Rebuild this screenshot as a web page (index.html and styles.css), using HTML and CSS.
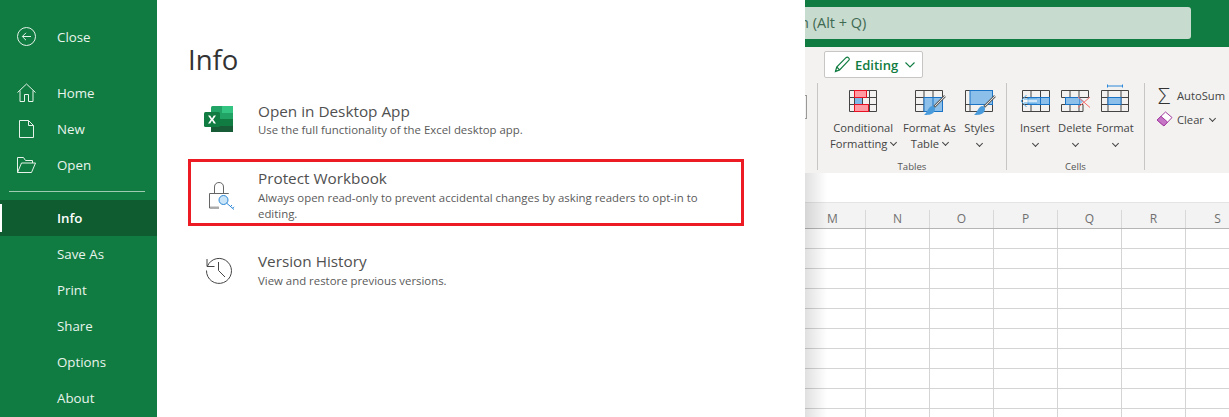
FILE: index.html
```html
<!DOCTYPE html>
<html lang="en">
<head>
<meta charset="utf-8">
<title>Info</title>
<link rel="stylesheet" href="styles.css">
</head>
<body>
<div class="app">
  <nav class="side">
    <a class="nav close-item"><span class="nav-ico"><svg width="22" height="22" viewBox="0 0 22 22"><circle cx="10.5" cy="10.5" r="9" fill="none" stroke="#e6f2ea" stroke-width="1"/><path d="M15 10.5H6.5M10 6.8L6.3 10.5L10 14.2" fill="none" stroke="#e6f2ea"/></svg></span>Close</a>
    <a class="nav"><span class="nav-ico"><svg width="22" height="22" viewBox="0 0 22 22"><path d="M1.5 10.5L10.5 2L19.5 10.5M4 8.5V19.5H8.5V12.5H12.5V19.5H17V8.5" fill="none" stroke="#e6f2ea"/></svg></span>Home</a>
    <a class="nav"><span class="nav-ico"><svg width="22" height="22" viewBox="0 0 22 22"><path d="M3.5 2.5V19.5H17.5V7.5L12.5 2.5ZM12.5 2.5V7.5H17.5" fill="none" stroke="#e6f2ea"/></svg></span>New</a>
    <a class="nav"><span class="nav-ico"><svg width="22" height="22" viewBox="0 0 22 22"><path d="M1.5 18.5V3.5H7.5L9.5 6.5H16.5V9M1.5 18.5H15.5L19.5 9H5.5L1.5 18.5Z" fill="none" stroke="#e6f2ea"/></svg></span>Open</a>
    <hr class="side-sep">
    <a class="nav active">Info</a>
    <a class="nav">Save As</a>
    <a class="nav">Print</a>
    <a class="nav">Share</a>
    <a class="nav">Options</a>
    <a class="nav">About</a>
  </nav>

  <main class="info">
    <h1 class="info-title">Info</h1>
    <div class="option opt-open">
      <span class="opt-ico"><svg width="32" height="30" viewBox="0 0 32 30"><rect x="8" y="1" width="22" height="26" rx="1.5" fill="#21a366"/><rect x="19" y="1" width="11" height="7" fill="#33c481"/><rect x="8" y="14" width="22" height="7" fill="#107c41"/><rect x="8" y="21" width="22" height="6" fill="#185c37"/><rect x="1" y="7" width="16" height="15" rx="1.5" fill="#107c41"/><path d="M5 10.5H7.2L9 13.4L10.8 10.5H13L10.2 14.5L13 18.5H10.8L9 15.6L7.2 18.5H5L7.8 14.5Z" fill="#fff"/></svg></span>
      <div><div class="opt-title">Open in Desktop App</div><p class="opt-desc">Use the full functionality of the Excel desktop app.</p></div>
    </div>
    <div class="option opt-protect">
      <span class="opt-ico"><svg width="30" height="30" viewBox="0 0 30 30"><path d="M6.5 12V6C6.5 3 8.5 1.5 11 1.5S15.5 3 15.5 6V12" fill="none" stroke="#666"/><path d="M20.5 13V12.5H1.5V27H11" fill="none" stroke="#666"/><path d="M2 26.5H11" stroke="#aaa" stroke-width="2"/><circle cx="15.5" cy="19" r="4.5" fill="#c9e5f7" stroke="#2b88d8"/><path d="M18.7 22.2L26 28.5M22.5 25.5L24 24M24.5 27.3L26 25.8" fill="none" stroke="#2b88d8"/></svg></span>
      <div><div class="opt-title">Protect Workbook</div><p class="opt-desc">Always open read-only to prevent accidental changes by asking readers to opt-in to editing.</p></div>
    </div>
    <div class="option opt-history">
      <span class="opt-ico"><svg width="32" height="32" viewBox="0 0 32 32"><path d="M4 5V12.5H11.5" fill="none" stroke="#444"/><path d="M4.5 12A12.5 12.5 0 1 1 3.5 16.5" fill="none" stroke="#444"/><path d="M15.5 8V16.5L22 23" fill="none" stroke="#444"/></svg></span>
      <div><div class="opt-title">Version History</div><p class="opt-desc">View and restore previous versions.</p></div>
    </div>
  </main>

  <section class="excel">
    <div class="topbar"><div class="search">Search (Alt + Q)</div></div>
    <div class="ribbon">
      <div class="mode-row">
        <div class="mode"><svg width="17" height="17" viewBox="0 0 17 17"><path d="M1.5 15.5L2.7 11L12 1.7C12.8 1 13.8 1 14.6 1.9C15.5 2.7 15.5 3.6 14.7 4.4L5.6 13.9Z" fill="none" stroke="#107c41" stroke-width="1.2"/><path d="M2.7 11L5.6 13.9" stroke="#107c41" stroke-width="1.2"/></svg><span>Editing</span><svg width="12" height="8" viewBox="0 0 12 8"><path d="M1.5 1.5L6 6L10.5 1.5" fill="none" stroke="#107c41" stroke-width="1.1"/></svg></div>
      </div>
      <div class="tools">
        <div class="group g-stub"><span class="stub"></span></div>
        <div class="group g-tables">
          <div class="btns">
            <div class="btn b-wide">
              <svg class="tool-ico" width="30" height="28" viewBox="0 0 30 28"><rect x="6.5" y="8.5" width="8" height="7" fill="#7db8e8" stroke="#1a73c4"/><path d="M1.5 1.5H28.5V22.5H1.5ZM1.5 8.5H28.5M1.5 15.5H28.5M6.5 1.5V22.5M14.5 8.5V15.5M21.5 1.5V22.5" fill="none" stroke="#444"/><g fill="#ff9aa2" stroke="#e81123"><rect x="6.5" y="1.5" width="12" height="7"/><rect x="6.5" y="15.5" width="14" height="7"/></g></svg>
              <span class="lbl">Conditional</span><span class="lbl">Formatting<i class="chev-in"></i></span>
            </div>
            <div class="btn b-wide">
              <svg class="tool-ico tool-brush" width="32" height="28" viewBox="0 0 32 28"><path d="M1.5 1.5H28.5V22.5H1.5ZM1.5 8.5H28.5M1.5 15.5H28.5M10 1.5V22.5M19 1.5V22.5" fill="none" stroke="#444"/><rect x="10" y="8.5" width="18.5" height="14" fill="#8cc0ea" stroke="#1a73c4"/><path d="M19 8.5V22.5" stroke="#1a73c4"/><path d="M31 7L20 18" stroke="#666" stroke-width="2.5"/><path d="M31 7L21 17" stroke="#fff" stroke-width=".8"/><path d="M18 17C21 17 22 20 20 23C18 26 13 26 10 26C13 24 14 18 18 17Z" fill="#4a9bdc"/></svg>
              <span class="lbl">Format As</span><span class="lbl">Table<i class="chev-in"></i></span>
            </div>
            <div class="btn b-narrow">
              <svg class="tool-ico tool-brush" width="32" height="28" viewBox="0 0 32 28"><path d="M1.5 1.5H28.5V22.5H1.5ZM1.5 15.5H28.5M6 15.5V22.5" fill="none" stroke="#444"/><rect x="6" y="1.5" width="22.5" height="14" fill="#8cc0ea" stroke="#1a73c4"/><path d="M31 7L20 18" stroke="#666" stroke-width="2.5"/><path d="M31 7L21 17" stroke="#fff" stroke-width=".8"/><path d="M18 17C21 17 22 20 20 23C18 26 13 26 10 26C13 24 14 18 18 17Z" fill="#4a9bdc"/></svg>
              <span class="lbl">Styles</span><i class="chev"></i>
            </div>
          </div>
          <div class="group-name">Tables</div>
        </div>
        <div class="group g-cells">
          <div class="btns">
            <div class="btn b-cell">
              <svg class="tool-ico" width="32" height="28" viewBox="0 0 32 28"><path d="M3.5 1.5H30.5V22.5H3.5ZM3.5 8.5H30.5M3.5 15.5H30.5M12 1.5V22.5M21.5 1.5V22.5" fill="none" stroke="#444"/><rect x="9" y="8.5" width="21.5" height="7" fill="#8cc0ea" stroke="#1a73c4"/><path d="M21.5 8.5V15.5" stroke="#1a73c4"/><path d="M18 10H5V14H18Z" fill="#fff" fill-opacity=".6"/><path d="M18 10H5M18 14H5M7.5 6L2 12L7.5 18" fill="none" stroke="#4ea6e6"/></svg>
              <span class="lbl">Insert</span><i class="chev"></i>
            </div>
            <div class="btn b-cell">
              <svg class="tool-ico" width="32" height="28" viewBox="0 0 32 28"><path d="M2.5 1.5H29.5V8.5H2.5ZM2.5 15.5H24V22.5H2.5ZM11 1.5V8.5M20 1.5V8.5M11 15.5V22.5M20 15.5V22.5" fill="none" stroke="#444"/><rect x="6.5" y="8.5" width="14" height="7" fill="#8cc0ea" stroke="#1a73c4"/><path d="M20.5 8.5V15.5L25 12Z" fill="#8cc0ea"/><path d="M19 8L31 18.5M31 8L19 18.5" stroke="#f56b6b"/></svg>
              <span class="lbl">Delete</span><i class="chev"></i>
            </div>
            <div class="btn b-cell">
              <svg class="tool-ico tool-top" width="32" height="30" viewBox="0 0 32 30"><path d="M8 3H24M8.500 1.500V4.500M23.500 1.500V4.500" stroke="#2b88d8"/><path d="M2.500 7.500H29.500V28.500H2.500ZM2.500 14.500H29.500M2.500 21.500H29.500M9 7.500V28.500M22 7.500V28.500" fill="none" stroke="#444"/><rect x="9" y="14.500" width="13" height="7" fill="#8cc0ea" stroke="#1a73c4"/></svg>
              <span class="lbl">Format</span><i class="chev"></i>
            </div>
          </div>
          <div class="group-name">Cells</div>
        </div>
        <div class="g-edit">
          <div class="edit-row"><span class="edit-ico sigma">Σ</span><span>AutoSum</span></div>
          <div class="edit-row"><span class="edit-ico"><svg class="eraser" width="18" height="16" viewBox="0 0 18 16"><path d="M1 9L9.500 1L16 6.500L8 15Z" fill="#fff" stroke="#a33ea1"/><path d="M1 9L5 5.300L11.500 11L8 15Z" fill="#c674c5" stroke="#a33ea1"/></svg></span><span>Clear</span><i class="chev chev-edit"></i></div>
        </div>
      </div>
    </div>
    <div class="formula"></div>
    <div class="col-head">
      <span class="col c-first">M</span><span class="col">N</span><span class="col">O</span><span class="col">P</span><span class="col">Q</span><span class="col">R</span><span class="col">S</span>
    </div>
    <div class="cells"></div>
    <div class="edge-shade"></div>
  </section>
</div>
</body>
</html>
```
FILE: styles.css
```css
* { box-sizing: border-box; }
html, body { margin: 0; height: 100%; overflow: hidden; }
body { font-family: "Open Sans", "Noto Sans", sans-serif; background: #fff; }
.app { display: flex; width: 1229px; height: 417px; overflow: hidden; }

/* Backstage sidebar */
.side { flex: 0 0 157px; background: #107c41; padding-top: 19px; color: #e9f4ed; }
.nav { display: flex; align-items: center; height: 36px; padding-left: 57px; font-size: 13.3px; position: relative; }
.nav-ico { position: absolute; left: 16px; top: 7px; width: 22px; height: 22px; }
.nav-ico svg { display: block; }
.close-item { margin-bottom: 20px; }
.side-sep { border: 0; height: 1px; background: #9fcbb2; margin: 8px 12px 8px 9px; }
.active { background: #0e5c2f; font-weight: 600; color: #fff; }
.active::before { content: ""; position: absolute; left: 0; top: 4px; bottom: 4px; width: 2px; background: #fff; }

/* Info panel */
.info { flex: 0 0 648px; padding: 42px 0 0 31px; color: #444; }
.info-title { margin: 0 0 22px; font-size: 27.5px; line-height: 36px; font-weight: 400; color: #333; }
.option { display: flex; width: 556px; }
.opt-ico { flex: 0 0 70px; padding-left: 15px; }
.opt-ico svg { display: block; }
.opt-title { font-size: 15.3px; line-height: 22px; color: #505050; }
.opt-desc { margin: 0; font-size: 11.4px; line-height: 16px; color: #5a5a5a; }
.opt-open { height: 40px; margin-bottom: 19px; }
.opt-open .opt-ico { padding-top: 5px; }
.opt-protect { height: 67px; border: 3px solid #ed1c24; padding-top: 5px; margin-bottom: 24px; }
.opt-protect .opt-ico { padding-top: 14px; padding-left: 17px; flex-basis: 67px; }
.opt-protect .opt-desc { max-width: 470px; margin-top: 1px; }
.opt-history .opt-desc { margin-top: 1px; }
.opt-history .opt-ico { padding-top: 4px; }

/* Excel window behind */
.excel { flex: 1; position: relative; overflow: hidden; background: #fff; }
.topbar { height: 47px; background: #107c41; padding-top: 7px; }
.search { height: 32px; width: 486px; margin-left: -100px; padding-left: 58px; background: #c8dbcf; border-radius: 3px; font-size: 14.5px; line-height: 32px; color: #3f6a52; }
.ribbon { height: 126px; background: #f3f2f1; box-shadow: 0 1px 2px rgba(0,0,0,.12); font-size: 11.2px; color: #444; }
.mode-row { height: 36px; padding: 4px 0 0 19px; }
.mode { display: flex; align-items: center; gap: 4px; width: 99px; height: 27px; padding-left: 9px; background: #fff; border: 1px solid #c8c6c4; border-radius: 2px; color: #107c41; font-size: 13px; font-weight: 600; }
.mode span { margin-right: 2px; }
.tools { display: flex; height: 87px; }
.group { border-right: 1px solid #c8c6c4; position: relative; display: flex; flex-direction: column; }
.g-stub { flex: 0 0 13px; }
.stub { display: block; width: 2px; height: 24px; margin-top: 12px; border: 1px solid #999; border-left: 0; }
.g-tables { flex: 0 0 189px; }
.g-cells { flex: 0 0 138px; }
.btns { display: flex; flex: 1; }
.g-tables .btns { padding-left: 12px; }
.g-cells .btns { padding-left: 8px; }
.btn { display: flex; flex-direction: column; align-items: center; padding-top: 6px; line-height: 16px; }
.b-wide { flex: 0 0 66px; }
.b-narrow { flex: 0 0 31px; }
.b-cell { flex: 0 0 40px; }
.tool-ico { display: block; flex: none; margin-bottom: 3px; overflow: visible; }
.tool-brush { margin-left: 2px; }
.tool-top { margin-top: -6px; margin-bottom: 7px; }
.lbl { display: block; white-space: nowrap; }
.chev, .chev-in { display: inline-block; width: 5px; height: 5px; border-right: 1px solid #444; border-bottom: 1px solid #444; transform: rotate(45deg); }
.chev { margin-top: 5px; }
.chev-in { margin: 0 0 3px 4px; }
.group-name { text-align: center; font-size: 9.6px; line-height: 14px; margin-bottom: -4px; color: #555; }
.g-edit { padding: 0 0 0 13px; }
.edit-row { display: flex; align-items: center; height: 24px; white-space: nowrap; }
.edit-ico { flex: 0 0 19px; display: flex; align-items: center; }
.sigma { font-size: 22px; font-weight: 300; color: #333; }
.eraser { margin-left: -2px; }
.chev-edit { margin: -2px 0 0 6px; }

.formula { height: 29px; background: #fff; }
.col-head { display: flex; height: 27px; background: #f3f3f3; border-top: 1px solid #e4e4e4; border-bottom: 1px solid #b5b5b5; padding-top: 7px; }
.col { flex: 0 0 64px; text-align: center; font-size: 12px; line-height: 17px; color: #707070; border-right: 1px solid #d8d8d8; }
.c-first { flex-basis: 61px; padding-right: 5px; }
.cells { height: 188px; background-color: #fff;
  background-image: linear-gradient(to right, #d4d4d4 1px, transparent 1px), linear-gradient(to bottom, #d4d4d4 1px, transparent 1px);
  background-size: 64px 100%, 100% 20px;
  background-position: 60px 0, 0 19px; }
.edge-shade { position: absolute; left: 0; top: 173px; bottom: 0; width: 22px; background: linear-gradient(to right, rgba(0,0,0,.12), rgba(0,0,0,0)); pointer-events: none; }
```
